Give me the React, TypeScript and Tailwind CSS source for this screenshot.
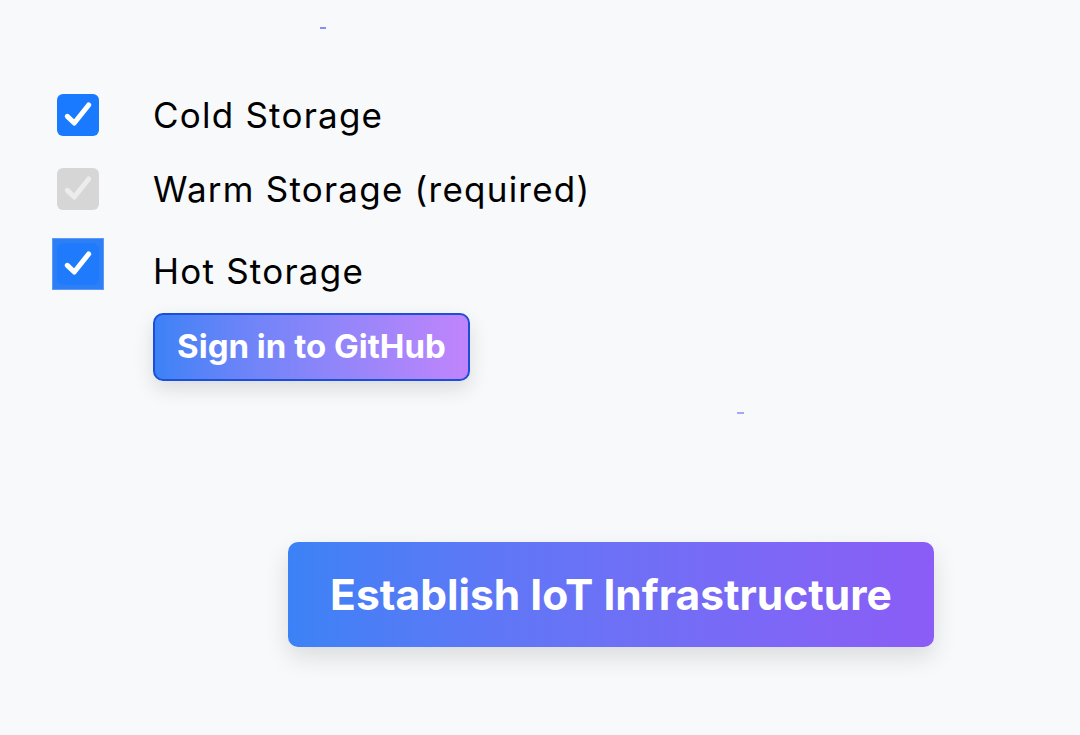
import { ReactNode } from 'react'

function Check({ color = 'white' }: { color?: string }) {
  return (
    <svg viewBox="0 0 24 24" className="h-[32px] w-[32px]" fill="none" stroke={color} strokeWidth={3.8} strokeLinecap="round" strokeLinejoin="round">
      <path d="M4 13l5.2 5L20 4.5" />
    </svg>
  )
}

function Box({ disabled }: { disabled?: boolean }) {
  return (
    <div
      className={`flex h-[42px] w-[42px] items-center justify-center rounded-[6px] ${
        disabled ? 'bg-[#d6d6d6]' : 'bg-[#1a7aff]'
      }`}
    >
      <Check color={disabled ? '#ececec' : 'white'} />
    </div>
  )
}

function Row({ children, box }: { children: ReactNode; box: ReactNode }) {
  return (
    <div className="flex items-center">
      <div className="flex w-[96px] items-center justify-start">{box}</div>
      <span className="text-[35px] leading-none tracking-[0.035em] text-black">{children}</span>
    </div>
  )
}

export default function App() {
  return (
    <div className="relative min-h-screen bg-[#f8f9fb]" style={{ fontFamily: 'Inter, "Noto Sans", sans-serif' }}>
      <div className="absolute left-[320px] top-[27px] h-[2px] w-[6px] bg-[#8b8cf6]" />
      <div className="absolute left-[737px] top-[412px] h-[2px] w-[7px] bg-[#a5a6f8]" />

      <div className="flex flex-col pl-[57px] pt-[94px]">
        <Row box={<Box />}>Cold Storage</Row>
        <div className="h-[32px]" />
        <Row box={<Box disabled />}>Warm Storage (required)</Row>
        <div className="flex items-start pt-[28px]">
          <div className="w-[96px]">
            <div className="-ml-[5px] flex h-[52px] w-[52px] items-center justify-center border border-[#5b9bf7] bg-[#2e7ff6]">
              <div className="flex h-[42px] w-[42px] items-center justify-center rounded-[6px] bg-[#1f7bfb]">
                <Check />
              </div>
            </div>
          </div>
          <div className="flex flex-col items-start pt-[16px]">
            <span className="text-[35px] leading-none tracking-[0.035em] text-black">Hot Storage</span>
            <button className="mt-[24px] h-[68px] w-[317px] rounded-[10px] border-2 border-[#1d4ed8] bg-gradient-to-r from-[#3b82f6] to-[#c084fc] text-[33px] font-bold text-white shadow-[0_8px_20px_rgba(0,0,0,0.12)]">
              Sign in to GitHub
            </button>
          </div>
        </div>
      </div>

      <div className="flex pl-[288px] pt-[161px]">
        <button className="h-[105px] w-[646px] rounded-[10px] bg-gradient-to-r from-[#3b82f6] to-[#8b5cf6] text-[42.5px] font-bold text-white shadow-[0_10px_24px_rgba(0,0,0,0.12)]">
          Establish IoT Infrastructure
        </button>
      </div>
    </div>
  )
}
